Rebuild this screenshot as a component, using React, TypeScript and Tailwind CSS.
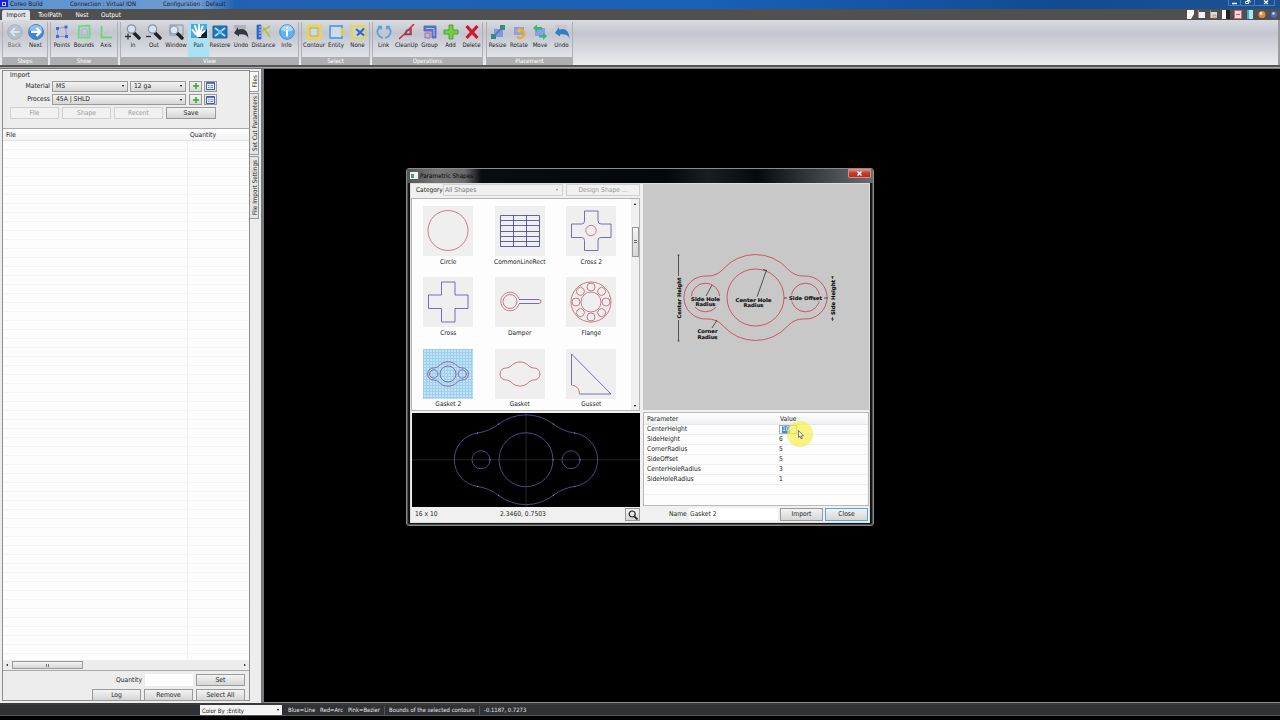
import type { ReactNode } from "react";

const BOX = "border border-[#9a9a9a] bg-gradient-to-b from-[#f3f3f3] to-[#d6d6d6]";

// Ribbon icons, all on a 16x16 grid
const magnifier = (
  <>
    <path d="M9 9l5 5" stroke="#222" strokeWidth="3.4" strokeLinecap="round" />
    <circle cx="6.5" cy="5" r="4.2" fill="#d5e2ee" stroke="#8795a6" strokeWidth="1.2" />
  </>
);

const icons: Record<string, ReactNode> = {
  back: (
    <>
      <circle cx="8" cy="8" r="7.3" fill="#aab9cc" stroke="#8c9cb0" />
      <path d="M12.5 8H4.5M8 4L4 8l4 4" stroke="#eef2f6" strokeWidth="2" fill="none" />
    </>
  ),
  next: (
    <>
      <circle cx="8" cy="8" r="7.5" fill="#3a86dc" stroke="#5d7da8" />
      <path d="M1.5 6.5a6.6 6.6 0 0113 0q-6 3-13 0z" fill="#8dc0f2" />
      <path d="M3 8h9M8.5 4l4 4-4 4" stroke="#fff" strokeWidth="2.2" fill="none" />
    </>
  ),
  points: (
    <>
      <path d="M3.5 4.5l8-1.5 1 9.5h-9z" fill="none" stroke="#8a9be0" />
      <path d="M2 3h3v3H2zM10.5 1.5h3v3h-3zM2 11h3v3H2zM11 11h3v3h-3z" fill="#4c67e0" />
    </>
  ),
  bounds: (
    <>
      <path d="M3 2.500L13.500 1.500V13.500H2.500z" fill="none" stroke="#6fdc7c" strokeWidth="1.8" />
      <path d="M5.5 5.500l5.500-1 .5 6.500H5z" fill="none" stroke="#a5b0dc" />
    </>
  ),
  axis: (
    <>
      <path d="M3.5 2v11.5H14" fill="none" stroke="#63d976" strokeWidth="1.8" />
      <path d="M5 12l6-6" stroke="#b9c0d8" />
    </>
  ),
  in: (
    <>
      {magnifier}
      <path d="M0 12.5h6M3 9.5v6" stroke="#333" strokeWidth="1.3" />
    </>
  ),
  out: (
    <>
      {magnifier}
      <path d="M0 12.5h5" stroke="#333" strokeWidth="1.3" />
    </>
  ),
  window: (
    <>
      <path d="M2 1h13v10H2z" fill="#cbd2dc" stroke="#7b8797" strokeWidth=".8" />
      <path d="M9 9l5 5" stroke="#222" strokeWidth="3.4" strokeLinecap="round" />
      <circle cx="6" cy="6" r="4" fill="#dde7f0" stroke="#8795a6" strokeWidth="1.2" />
    </>
  ),
  pan: (
    <>
      <path d="M0 0h16v14H0z" fill="#4fa6dc" />
      <path d="M7 14L16 5v9z" fill="#17212d" />
      <path
        d="M4.5 10L1.5 6M6 8L4 2M8 8V1M9.5 8l2-5.5M10 10l3.5-3"
        stroke="#fff"
        strokeWidth="2"
        strokeLinecap="round"
      />
      <path d="M4 8h7l-1 5H6z" fill="#fff" />
    </>
  ),
  restore: (
    <>
      <path d="M1 2h14v12H1z" fill="#1878bd" stroke="#3b5f8a" />
      <path d="M3 4l4 3M13 4L9 7M3 12l4-3M13 12L9 9" stroke="#b9e4fa" strokeWidth="1.6" />
      <path d="M6 6h4v4H6z" fill="#6ac1ee" />
    </>
  ),
  undo: (
    <>
      <path d="M1 1h12v4H1z" fill="#b0b4bc" />
      <path d="M1 9l4-6v2.500q10-3 10.500 9-2-5-9.500-4v2z" fill="#34373c" />
    </>
  ),
  distance: (
    <>
      <path d="M1 1h4v14H1z" fill="#2d6fd6" stroke="#1a4ba8" strokeWidth=".6" />
      <path d="M3 3h2M3 6h2M3 9h2M3 12h2" stroke="#cfe0ff" />
      <path d="M5 8l9-6M7 3l7 10" stroke="#b9bf40" strokeWidth="1.6" fill="none" />
    </>
  ),
  info: (
    <>
      <circle cx="8" cy="8" r="7.3" fill="#5fb4ec" stroke="#4f8fc4" />
      <path d="M2 6a6.2 6.2 0 0112 0q-6 3-12 0z" fill="#a9dcf8" />
      <path d="M8 3v2M8 6.5v6" stroke="#fff" strokeWidth="2" />
    </>
  ),
  contour: (
    <>
      <path d="M2 2h12v12H2z" fill="#d6d8dc" stroke="#ecd83a" strokeWidth="2.4" />
      <path d="M4 4h8v8H4z" fill="none" stroke="#8a8c70" strokeWidth=".7" />
    </>
  ),
  entity: (
    <>
      <path d="M2 2h12v12H2z" fill="#cfdbec" stroke="#62a2ea" strokeWidth="2" />
      <path d="M14 4v8" stroke="#ddcb3c" strokeWidth="2.4" />
    </>
  ),
  none: (
    <>
      <path d="M2 2h12v12H2z" fill="#cfd4da" stroke="#e6d64a" strokeWidth="2.2" />
      <path d="M6 5l8 6.500M14 4.500L7 11.500" stroke="#3267cf" strokeWidth="2.2" />
    </>
  ),
  link: (
    <path
      d="M4.500 3Q0 6 2 10t5 3.500M11.500 3Q16 6 14 10t-5 3.500M2 3l3-.5.500 3M14 3l-3-.5-.5 3"
      fill="none"
      stroke="#5ba3d8"
      strokeWidth="1.8"
    />
  ),
  cleanup: (
    <>
      <path d="M0 15l5-4.500L15 0M5 10.500h7V4" fill="none" stroke="#d3232b" strokeWidth="1.5" />
      <path d="M7 6h4v4H7z" fill="none" stroke="#55508a" />
    </>
  ),
  group: (
    <>
      <path d="M2 2h12v12h-4V7H2z" fill="#4676dc" stroke="#7a63ae" />
      <path d="M4 4.500h8V12" fill="none" stroke="#a9c4f5" />
      <path d="M3 9h5v5H3z" fill="#d9b0bd" stroke="#7a63ae" strokeWidth=".8" />
    </>
  ),
  add: <path d="M6 1h4v5h5v4h-5v5H6v-5H1V6h5z" fill="#72cf40" stroke="#43982a" strokeWidth=".8" />,
  delete: <path d="M2.5 2l11 12M13.5 2l-11 12" stroke="#cf1726" strokeWidth="3.2" />,
  resize: (
    <>
      <path d="M4 5h9v8H4z" fill="#7f97e6" />
      <path d="M10 1h5v5h-5zM1 10h5v5H1z" fill="#3d868c" />
      <path d="M3 13L13 3" stroke="#3d868c" strokeWidth="1.4" />
    </>
  ),
  rotate: (
    <>
      <path d="M3 3h10v8H3z" fill="#8f9fe6" />
      <path d="M6 12.500a4 4 0 102-6.500" fill="none" stroke="#eeaa24" strokeWidth="2.4" />
      <path d="M9.5 3.5v6L5 6.500z" fill="#f2bb3b" />
    </>
  ),
  move: (
    <>
      <path d="M3 4h10v8H3z" fill="#8c9fe6" />
      <path d="M1 4l4-3.500V3h5v2.500H5V8zM15 12l-4-3.500V11H7v2.500h4V16z" fill="#37b877" />
    </>
  ),
  undoMove: (
    <>
      <path d="M1 1h12v4H1z" fill="#c3c7cf" />
      <path d="M1 9l4-6v2.500q10-3 10.500 9-2-5-9.500-4v2z" fill="#2f80c8" />
    </>
  ),
};

const groups = [
  {
    name: "Steps",
    width: "ml-0.5 w-[46px]",
    items: [
      ["back", "Back", "w-[21px] opacity-60"],
      ["next", "Next", "w-[21px]"],
    ],
  },
  {
    name: "Show",
    width: "ml-0.5 w-[68px]",
    items: [
      ["points", "Points", "w-[22px]"],
      ["bounds", "Bounds", "w-[22px]"],
      ["axis", "Axis", "w-[22px]"],
    ],
  },
  {
    name: "View",
    width: "ml-0.5 w-[179px]",
    items: [
      ["in", "In", "w-[22px]"],
      ["out", "Out", "w-[20px]"],
      ["window", "Window", "w-[24px]"],
      ["pan", "Pan", "w-[21px] bg-[#a9e3f3]"],
      ["restore", "Restore", "w-[22px]"],
      ["undo", "Undo", "w-[20px]"],
      ["distance", "Distance", "w-[25px]"],
      ["info", "Info", "w-[21px]"],
    ],
  },
  {
    name: "Select",
    width: "ml-0.5 w-[69px]",
    items: [
      ["contour", "Contour", "w-[23px]"],
      ["entity", "Entity", "w-[21px]"],
      ["none", "None", "w-[22px]"],
    ],
  },
  {
    name: "Operations",
    width: "ml-0.5 w-[111px]",
    items: [
      ["link", "Link", "w-[22px]"],
      ["cleanup", "CleanUp", "w-[24px]"],
      ["group", "Group", "w-[22px]"],
      ["add", "Add", "w-[20px]"],
      ["delete", "Delete", "w-[22px]"],
    ],
  },
  {
    name: "Placement",
    width: "ml-[3px] w-[87px]",
    items: [
      ["resize", "Resize", "w-[22px]"],
      ["rotate", "Rotate", "w-[21px]"],
      ["move", "Move", "w-[21px]"],
      ["undoMove", "Undo", "w-[22px]"],
    ],
  },
];

function Ribbon() {
  return (
    <div className="flex h-[45px] shrink-0 border-r-2 border-[#9b9ca0] bg-gradient-to-b from-[#d9dbe0] via-[#c3c6cf] via-30% to-[#e9edee] pt-[2px]">
      {groups.map((group) => (
        <div
          key={group.name}
          className={`flex h-[43px] shrink-0 flex-col border border-t-0 border-[#aeb0b5] ${group.width}`}
        >
          <div className="flex h-[35px] justify-center">
            {group.items.map(([icon, label, width]) => (
              <div key={icon} className={`flex shrink-0 flex-col items-center pt-[2px] ${width}`}>
                <svg viewBox="0 0 16 16" fill="none" className="h-4 w-4 shrink-0">
                  {icons[icon]}
                </svg>
                <span className="mt-px text-[6.1px] leading-[8px] whitespace-nowrap">{label}</span>
              </div>
            ))}
          </div>
          <div className="flex h-[7px] items-center justify-center bg-[#acaeb1] text-[6px] leading-none text-white">
            {group.name}
          </div>
        </div>
      ))}
    </div>
  );
}

function QuickIcons() {
  return (
    <svg viewBox="0 0 92 12" className="h-3 w-[92px]">
      <path d="M1 1h7v4l-3 5H1z" fill="#fff" />
      <path d="M12 2v7h7V3h-7" fill="#f2f2f2" />
      <path d="M12.500 1v8" stroke="#b99a63" />
      <path d="M24 2v7h7V3h-7" fill="#dcdfe8" />
      <path d="M24.500 1v8M27 6h3v3h-3z" stroke="#a88b60" fill="none" strokeWidth=".8" />
      <path d="M36 1h8v9h-8z" fill="#222" />
      <path d="M36 1h4v9h-4z" fill="#fff" />
      <path d="M48.5 1.5h7v8h-7z" fill="#f7dadd" stroke="#c96a73" />
      <path d="M50 5.5h4" stroke="#b35f68" />
      <path d="M61 1h6v9h-6z" fill="#a9e7f3" />
      <path d="M61 1h2v9h-2z" fill="#4ba8c4" />
      <circle cx="76" cy="5.5" r="3.5" fill="#e08a45" />
      <circle cx="75" cy="4.5" r="1.4" fill="#ffe2b8" />
      <circle cx="88" cy="5.5" r="3.2" fill="#5068c8" />
      <circle cx="87.5" cy="4.500" r="1.3" fill="#d5def8" />
    </svg>
  );
}

function Select({ value, className }: { value: string; className: string }) {
  return (
    <div className={`flex h-[11px] items-center justify-between pr-[3px] pl-[3px] ${BOX} ${className}`}>
      <span>{value}</span>
      <span className="h-0 w-0 border-x-[1.5px] border-t-2 border-x-transparent border-t-black" />
    </div>
  );
}

function PlusAndTable() {
  return (
    <>
      <div className={`ml-[3px] flex h-[11px] w-[13px] items-center justify-center ${BOX}`}>
        <svg viewBox="0 0 6 6" className="h-[6px] w-[6px]">
          <path d="M3 0v6M0 3h6" stroke="#36a829" strokeWidth="1.5" />
        </svg>
      </div>
      <div className={`ml-0.5 flex h-[11px] w-[13px] items-center justify-center ${BOX}`}>
        <svg viewBox="0 0 9 8" className="h-2 w-[9px]">
          <path d="M.5.5h8v7h-8z" fill="#e3ecfa" stroke="#3a62b0" />
          <path d="M.5 1.2h8" stroke="#3a62b0" strokeWidth="1.2" />
          <path d="M2 3.7h1.5M4.5 3.7H7M2 5.5h1.5M4.5 5.5H7" stroke="#5077bd" strokeWidth=".8" />
        </svg>
      </div>
    </>
  );
}

function Button({
  children,
  className,
  disabled = false,
}: {
  children: ReactNode;
  className: string;
  disabled?: boolean;
}) {
  return (
    <button
      type="button"
      disabled={disabled}
      className={`flex shrink-0 items-center justify-center whitespace-nowrap ${
        disabled ? "border border-[#d0d0d0] bg-[#f1f1f1] text-[#9a9a9a]" : BOX
      } ${className}`}
    >
      {children}
    </button>
  );
}

function ImportPanel() {
  return (
    <div className="flex w-[264px] shrink-0 border-r-[3px] border-[#77787b] bg-[#ededee]">
      <div className="mt-px mb-[2px] ml-0.5 flex w-[248px] flex-col border border-[#8d8d8d]">
        <div className="flex h-[57px] shrink-0 flex-col">
          <div className="h-[9px] pl-[7px] leading-[8px]">Import</div>
          <div className="flex h-[12px] items-center">
            <span className="mr-[2px] w-[47px] text-right">Material</span>
            <Select value="MS" className="w-[76px]" />
            <Select value="12 ga" className="ml-0.5 w-[56px]" />
            <PlusAndTable />
          </div>
          <div className="mt-[2px] flex h-[11px] items-center">
            <span className="mr-[2px] w-[47px] pb-0.5 text-right leading-[8px]">Process</span>
            <Select value="45A | SHLD" className="w-[134px]" />
            <PlusAndTable />
          </div>
          <div className="mt-[2px] flex gap-[3px] pl-[7px]">
            <Button disabled className="h-[12px] w-[49px]">File</Button>
            <Button disabled className="h-[12px] w-[49px]">Shape</Button>
            <Button disabled className="h-[12px] w-[49px]">Recent</Button>
            <Button className="h-[12px] w-[50px]">Save</Button>
          </div>
        </div>
        <div className="flex min-h-0 flex-1 flex-col border-y border-[#a9a9a9] bg-[#fdfdfd]">
          <div className="flex h-[12px] shrink-0 items-center border-b border-[#e4e4e6] bg-gradient-to-b from-white to-[#f1f2f4] pt-px pl-[3px]">
            <span className="w-[184px]">File</span>
            <span>Quantity</span>
          </div>
          <div className="flex min-h-0 flex-1">
            <div className="w-[185px] border-r border-[#f2f2f2] bg-[repeating-linear-gradient(to_bottom,#fdfdfd_0_8px,#f5f5f5_8px_9px)]" />
            <div className="flex-1 bg-[repeating-linear-gradient(to_bottom,#fdfdfd_0_8px,#f5f5f5_8px_9px)]" />
          </div>
          <div className="flex h-[10px] shrink-0 items-center bg-[#ededed] px-[3px]">
            <span className="h-0 w-0 border-y-[1.5px] border-r-2 border-y-transparent border-r-black" />
            <div className={`ml-1 flex h-2 w-[71px] items-center justify-center gap-px ${BOX}`}>
              <span className="h-[3px] w-px bg-[#777]" />
              <span className="h-[3px] w-px bg-[#777]" />
            </div>
            <span className="ml-auto h-0 w-0 border-y-[1.5px] border-l-2 border-y-transparent border-l-black" />
          </div>
        </div>
        <div className="flex h-[29px] shrink-0 flex-col items-end gap-[3px] pt-[3px] pr-1">
          <div className="flex items-center gap-[3px]">
            <span>Quantity</span>
            <div className="h-[12px] w-[48px] bg-white" />
            <Button className="h-[12px] w-[49px]">Set</Button>
          </div>
          <div className="flex gap-[3px]">
            <Button className="h-[12px] w-[49px]">Log</Button>
            <Button className="h-[12px] w-[49px]">Remove</Button>
            <Button className="h-[12px] w-[49px]">Select All</Button>
          </div>
        </div>
      </div>
      <div className="mt-0.5 flex flex-col text-[6.3px]">
        <div className="flex h-[21px] w-[9px] items-center justify-center border border-l-0 border-[#999] bg-[#fafafa]">
          <span className="rotate-180 [writing-mode:vertical-rl]">Files</span>
        </div>
        <div className="mt-px flex h-[62px] w-[9px] items-center justify-center border border-l-0 border-[#999] bg-[#e4e4e5]">
          <span className="rotate-180 whitespace-nowrap [writing-mode:vertical-rl]">Set Cut Parameters</span>
        </div>
        <div className="mt-px flex h-[63px] w-[9px] items-center justify-center border border-l-0 border-[#999] bg-[#e4e4e5]">
          <span className="rotate-180 whitespace-nowrap [writing-mode:vertical-rl]">File Import Settings</span>
        </div>
      </div>
    </div>
  );
}

// Gasket outline around its own center, used by the thumbnails and the diagram
const GASKET =
  "M-48.6-21.45A21.4 21.4 0 00-32.1-28.6A43 43 0 0132.1-28.6A21.4 21.4 0 0048.6-21.45A21.5 21.5 0 1148.6 21.45A21.4 21.4 0 0032.1 28.6A43 43 0 01-32.1 28.6A21.4 21.4 0 00-48.6 21.45A21.5 21.5 0 11-48.6-21.45Z";

const RED = "#c0606c";
const BLUE = "#5450a0";

const flangeHoles = [0, 45, 90, 135, 180, 225, 270, 315];

const shapes: { name: string; art: ReactNode }[] = [
  { name: "Circle", art: <circle cx="25" cy="24.5" r="20" stroke={RED} /> },
  {
    name: "CommonLineRect",
    art: (
      <path
        d="M5.5 9.5h39v31h-39zM5.5 14.5h39M5.5 19.5h39M5.5 25.5h39M5.5 30.5h39M5.5 35.5h39M18.5 9.5v31M31.5 9.5v31"
        stroke="#3c3c98"
      />
    ),
  },
  {
    name: "Cross 2",
    art: (
      <>
        <path
          d="M18.5 5h13.5v10q0 3 3 3h10v13.5H35q-3 0-3 3v10H18.5v-10q0-3-3-3h-10V18h10q3 0 3-3z"
          stroke={BLUE}
        />
        <circle cx="25" cy="24.5" r="5.2" stroke={RED} />
      </>
    ),
  },
  {
    name: "Cross",
    art: <path d="M18.5 5h13.5v13h13v13.5H32V45H18.5V31.5h-13V18h13z" stroke={BLUE} />,
  },
  {
    name: "Damper",
    art: (
      <>
        <circle cx="15" cy="24.5" r="7" stroke={RED} />
        <path d="M24 22a9.3 9.3 0 100 5" stroke={RED} />
        <path d="M24 22.5h20M24 26.5h20" stroke={BLUE} />
        <path d="M44 22.5a2 2 0 010 4" stroke={RED} />
      </>
    ),
  },
  {
    name: "Flange",
    art: (
      <>
        <circle cx="25" cy="25" r="20" stroke={RED} />
        <circle cx="25" cy="25" r="10" stroke={RED} />
        {flangeHoles.map((angle) => (
          <circle
            key={angle}
            cx="25"
            cy="10"
            r="4"
            stroke={RED}
            transform={`rotate(${angle} 25 25)`}
          />
        ))}
      </>
    ),
  },
  {
    name: "Gasket 2",
    art: (
      <g transform="translate(25 25) scale(.285)" stroke="#7c5c9c" strokeWidth="3">
        <path d={GASKET} />
        <circle r="28" />
        <circle cx="-50" r="14.5" />
        <circle cx="50" r="14.5" />
      </g>
    ),
  },
  {
    name: "Gasket",
    art: (
      <g transform="translate(25 25) scale(.28)" stroke="#cc6870" strokeWidth="3.2">
        <path d={GASKET} />
      </g>
    ),
  },
  {
    name: "Gusset",
    art: (
      <>
        <path d="M5.5 36V5L45 45H13.5" stroke={BLUE} />
        <path d="M5.5 36q8 1 8 9" stroke={RED} />
      </>
    ),
  },
];

function ShapeList() {
  return (
    <div className="mt-px flex h-[213px] w-[229px] border border-[#b5b5b5] bg-[#fdfdfd]">
      <div className="grid w-[219px] grid-cols-[71.5px_71.5px_71.5px] grid-rows-[71.3px_71.3px_69px] pt-[7.5px] pl-[0.5px]">
        {shapes.map((shape) => (
          <div key={shape.name} className="flex flex-col items-center">
            <div
              className={
                shape.name === "Gasket 2"
                  ? "h-[50px] w-[50px] bg-[#bfe2f6] bg-[linear-gradient(#9fcfee_1px,transparent_1px),linear-gradient(to_right,#9fcfee_1px,transparent_1px)] bg-[size:3px_3px]"
                  : "h-[50px] w-[50px] bg-[#efefef]"
              }
            >
              <svg viewBox="0 0 50 50" fill="none" strokeWidth=".8" className="h-[50px] w-[50px]">
                {shape.art}
              </svg>
            </div>
            <span className="mt-[1.5px] text-[6.5px] whitespace-nowrap">{shape.name}</span>
          </div>
        ))}
      </div>
      <div className="flex w-2 flex-col items-center bg-[#f0f0f0] pt-1 pb-[3px]">
        <span className="h-0 w-0 border-x-[1.5px] border-b-2 border-x-transparent border-b-black" />
        <div className={`mt-[22px] flex h-[30px] w-[7px] flex-col items-center justify-center gap-px ${BOX}`}>
          <span className="h-px w-[3px] bg-[#666]" />
          <span className="h-px w-[3px] bg-[#666]" />
        </div>
        <span className="mt-auto h-0 w-0 border-x-[1.5px] border-t-2 border-x-transparent border-t-black" />
      </div>
    </div>
  );
}

function Preview() {
  return (
    <svg viewBox="-114 -46.5 228 93.5" fill="none" className="mt-0.5 ml-px h-[94px] w-[228px] bg-black">
      <path d="M-114 0H114M0-47V47" stroke="#2c332c" strokeWidth=".8" />
      <g stroke="#564f9c" strokeWidth=".9">
        <path d="M-48.7-26.7A45 45 0 00-27.4-35.6A45 45 0 0127.4-35.6A45 45 0 0048.7-26.7A27 27 0 0148.7 26.7A45 45 0 0027.4 35.6A45 45 0 01-27.4 35.6A45 45 0 00-48.7 26.7A27 27 0 01-48.7-26.7Z" />
        <circle r="27" />
        <circle cx="-45" r="9" />
        <circle cx="45" r="9" />
      </g>
      <path
        d="M-49-26.7h1M-27.9-35.6h1M26.9-35.6h1M48.2-26.7h1M-49 26.7h1M-27.9 35.6h1M26.9 35.6h1M48.2 26.7h1M26.5 0h1M-36.5 0h1M53.5 0h1"
        stroke="#a5a2e8"
      />
    </svg>
  );
}

function Diagram() {
  return (
    <svg
      viewBox="643 184 226 226"
      fill="none"
      className="h-[226px] w-[226px] bg-[#c8c8c8] text-[5.1px] font-bold"
    >
      <g transform="translate(755.5 297.5)" stroke="#d0475c" strokeWidth=".9">
        <path d={GASKET} />
        <circle r="28.5" />
        <circle cx="-50" r="14.3" />
        <circle cx="50" r="14.3" />
      </g>
      <path
        d="M678.5 255v21M678.5 320v21M677.5 255h2M677.5 341h2M832.5 276v3M831 277h3M832.5 317v4M831 319h3M706 296l6-11M757 297l9.5-27M763 269.5l4 1M712 328l5-8M784 298h3M824 298h4"
        stroke="#333"
        strokeWidth=".8"
      />
      {/* knock the circle strokes out behind the captions */}
      <path
        d="M690 296h31v11h-31zM735 296.5h37v10h-37zM788.5 294.5h34v7h-34z"
        fill="#c8c8c8"
        opacity=".9"
      />
      <g
        fill="#111"
        stroke="#111"
        strokeWidth=".15"
        textAnchor="middle"
        className="font-['DejaVu_Sans'] [font-stretch:normal]"
      >
        <text x="705.5" y="301" textLength="29" lengthAdjust="spacingAndGlyphs">Side Hole</text>
        <text x="705.5" y="306.4" textLength="20" lengthAdjust="spacingAndGlyphs">Radius</text>
        <text x="753.5" y="301.600" textLength="36" lengthAdjust="spacingAndGlyphs">Center Hole</text>
        <text x="753.5" y="307" textLength="20" lengthAdjust="spacingAndGlyphs">Radius</text>
        <text x="805.5" y="300" textLength="33" lengthAdjust="spacingAndGlyphs">Side Offset</text>
        <text x="707.5" y="333.4" textLength="20" lengthAdjust="spacingAndGlyphs">Corner</text>
        <text x="707.5" y="338.800" textLength="20" lengthAdjust="spacingAndGlyphs">Radius</text>
        <text transform="translate(680.500 298) rotate(-90)" textLength="41" lengthAdjust="spacingAndGlyphs">Center Height</text>
        <text transform="translate(834.500 297.5) rotate(-90)" textLength="35" lengthAdjust="spacingAndGlyphs">Side Height</text>
      </g>
    </svg>
  );
}

const parameters = [
  ["CenterHeight", "10"],
  ["SideHeight", "6"],
  ["CornerRadius", "5"],
  ["SideOffset", "5"],
  ["CenterHoleRadius", "3"],
  ["SideHoleRadius", "1"],
];

function ParameterTable() {
  return (
    <div className="mt-0.5 flex h-[94px] w-[226px] flex-col border border-[#b9b9b9] bg-[#fdfdfd]">
      <div className="flex h-[12px] shrink-0 items-center border-b border-[#e6e6e8] bg-gradient-to-b from-white to-[#f0f1f3] pt-[2px] pl-[3px]">
        <span className="w-[133px]">Parameter</span>
        <span>Value</span>
      </div>
      {parameters.map(([name, value], index) => (
        <div key={name} className="flex h-[10px] shrink-0 items-center border-b border-[#f0f0f0] pt-px pl-[3px]">
          <span className="w-[132px]">{name}</span>
          {index === 0 ? (
            <span className="flex h-[9px] w-[18px] items-center border border-[#aaa] bg-white pl-[2px]">
              <span className="bg-[#3a8ce6] leading-[7px] text-white">{value}</span>
            </span>
          ) : (
            <span>{value}</span>
          )}
        </div>
      ))}
      <div className="h-[10px] border-b border-[#f2f2f2]" />
    </div>
  );
}

function ShapesDialog() {
  return (
    <div className="absolute top-[168px] left-[406px] flex h-[358px] w-[468px] flex-col rounded-[3px] border border-[#8b8b8b] bg-[#111] px-[3px] pb-[2px] shadow-[inset_0_0_1px_1px_#555]">
      <div className="-mx-[3px] flex h-[13.5px] shrink-0 items-center rounded-t-[3px] bg-[linear-gradient(to_right,#555_0,#777_30px,#6a6a6a_58px,#0b0c10_74px,#06070b_260px,#1b1d22_300px,#08090d_350px,#33353a_400px,#6c6d70_465px)] pl-[3px]">
        <svg viewBox="0 0 8 7" className="h-[7px] w-2">
          <path d="M0 0h8v7H0z" fill="#f2f2f2" />
          <path d="M1 2h3v4H1z" fill="#4a9c78" />
        </svg>
        <span className="ml-[2px] text-[6.3px] text-black">Parametric Shapes</span>
        <div className="mr-[2px] ml-auto flex h-[9px] w-[23px] items-center justify-center self-start rounded-b-[2px] border border-t-0 border-[#d88] bg-gradient-to-b from-[#e0988c] via-[#c33a28] to-[#b8321f]">
          <svg viewBox="0 0 5 5" className="h-[5px] w-[5px]">
            <path d="M.5.5l4 4M4.5.5l-4 4" stroke="#fff" strokeWidth="1.4" />
          </svg>
        </div>
      </div>
      <div className="flex flex-1 justify-between border border-[#ddd] bg-[#f0f0f0]">
        <div className="flex w-[229px] flex-col">
          <div className="flex h-[13px] items-center">
            <span className="ml-[5px] w-[27px] text-[6.5px]">Category</span>
            <div className="flex h-[12px] w-[120px] items-center justify-between border border-[#d2d2d2] pr-1 pl-px text-[#777]">
              <span>All Shapes</span>
              <span className="h-0 w-0 border-x-[1.5px] border-t-2 border-x-transparent border-t-[#888]" />
            </div>
            <Button disabled className="ml-[3px] h-[12px] w-[74px]">Design Shape ...</Button>
          </div>
          <ShapeList />
          <Preview />
          <div className="mt-px flex h-[14px] items-center pl-[4px]">
            <span className="w-[85px]">16 x 10</span>
            <span>2.3460, 0.7503</span>
            <Button className="ml-auto h-[13px] w-[15px]">
              <svg viewBox="0 0 10 10" fill="none" stroke="#222" className="h-[10px] w-[10px]">
                <circle cx="4.2" cy="4" r="3" strokeWidth="1.2" />
                <path d="M6.3 6.3L9.5 9.5" strokeWidth="1.8" />
              </svg>
            </Button>
          </div>
        </div>
        <div className="flex w-[226px] flex-col">
          <Diagram />
          <ParameterTable />
          <div className="mt-px flex h-[15px] items-center">
            <span className="w-[46px] pl-[26px]">Name</span>
            <div className="flex h-[12px] w-[89px] items-center bg-white pl-px">Gasket 2</div>
            <Button className="ml-0.5 h-[13px] w-[43px]">Import</Button>
            <Button className="ml-[2px] h-[13px] w-[43px] outline -outline-offset-1 outline-[#54a9c9]">Close</Button>
          </div>
        </div>
      </div>
    </div>
  );
}

function Pointer() {
  return (
    <div className="absolute top-[421px] left-[787px] h-[26px] w-[26px] rounded-full bg-[#f5ee4e]/70">
      <svg viewBox="0 0 6 10" className="mt-[8.5px] ml-[11px] h-[10px] w-[6px]">
        <path d="M.5.5v7l1.6-1.3 1 2.6 1.2-.5-1-2.5h2z" fill="#fff" stroke="#444" strokeWidth=".7" />
      </svg>
    </div>
  );
}

export default function App() {
  return (
    <div className="relative flex h-[720px] w-[1280px] flex-col overflow-hidden bg-black font-['DejaVu_Sans_Condensed','DejaVu_Sans',sans-serif] text-[6.7px] leading-[9px] text-[#222] [font-stretch:condensed]">
      <div className="flex h-[9px] shrink-0 items-start bg-[linear-gradient(to_right,#5f92cc_0,#6c9bd2_200px,#2162b0_235px,#1861b7_700px,#104b92_1060px,#1b5293_1280px)] leading-[7px] whitespace-nowrap text-[#0c1b3a]">
        <div className="flex h-[7px] w-[8px] items-center justify-center bg-[#1c22d6]">
          <div className="h-1 w-1 border border-[#c6c8ff]" />
        </div>
        <span className="w-[60px] pl-[2px] text-[6.3px]">Coreo Build</span>
        <span className="w-[95px] pl-[2px] text-[6.1px]">Connection : Virtual ION</span>
        <span className="text-[6.1px]">Configuration : Default</span>
        <svg viewBox="0 0 52 8" fill="none" className="ml-auto h-2 w-[52px]">
          <path d="M.5 0v5.5h46V0M12.5 0v5.5M26.5 0v5.5" stroke="#4d7db8" />
          <path d="M4 3.5h5" stroke="#fff" strokeWidth="1.5" />
          <path d="M17.5 1.5h3v2h-3zM19 .5h3v2" stroke="#fff" />
          <path d="M36 .5l4 3.5M40 .5L36 4" stroke="#fff" strokeWidth="1.2" />
        </svg>
      </div>
      <div className="flex h-[11px] shrink-0 items-end bg-[#505051] text-[6.4px] text-white">
        <div className="ml-0.5 flex h-[10px] w-[28px] items-center justify-center rounded-t-[2px] bg-[#e3e4e7] text-[#222]">
          Import
        </div>
        <span className="w-[40px] text-center">ToolPath</span>
        <span className="w-[24px] text-center">Nest</span>
        <span className="w-[34px] text-center">Output</span>
        <div className="mr-[2px] ml-auto h-[11px]">
          <QuickIcons />
        </div>
      </div>
      <Ribbon />
      <div className="h-[4px] shrink-0 border-t-2 border-b border-t-[#555] border-b-[#777] bg-[#aaa]" />
      <div className="flex h-[634px] shrink-0">
        <ImportPanel />
        <div className="flex-1 border-b border-[#8a8b8e] bg-black" />
      </div>
      <div className="flex h-[13px] shrink-0 items-center border-t-2 border-b border-t-[#3a3a3d] border-b-[#55565a] bg-[#303135] text-[#e6e6e6]">
        <div className="ml-[200px] flex h-[10px] w-[82px] items-center justify-between bg-[#f4f4f4] pr-[3px] pl-[2px] text-[6px] text-[#222]">
          <span>Color By :Entity</span>
          <span className="h-0 w-0 border-x-[1.5px] border-t-2 border-x-transparent border-t-black" />
        </div>
        <div className="ml-[6px] flex items-center whitespace-nowrap text-[5.9px]">
          <span className="w-[32px]">Blue=Line</span>
          <span className="w-[28px]">Red=Arc</span>
          <span className="w-[36px]">Pink=Bezier</span>
          <span className="h-[9px] w-[95px] border-l border-[#55565a] pl-[4px]">Bounds of the selected contours</span>
          <span className="h-[9px] border-l border-[#55565a] pl-[4px]">-0.1187, 0.7273</span>
        </div>
      </div>
      <ShapesDialog />
      <Pointer />
    </div>
  );
}
